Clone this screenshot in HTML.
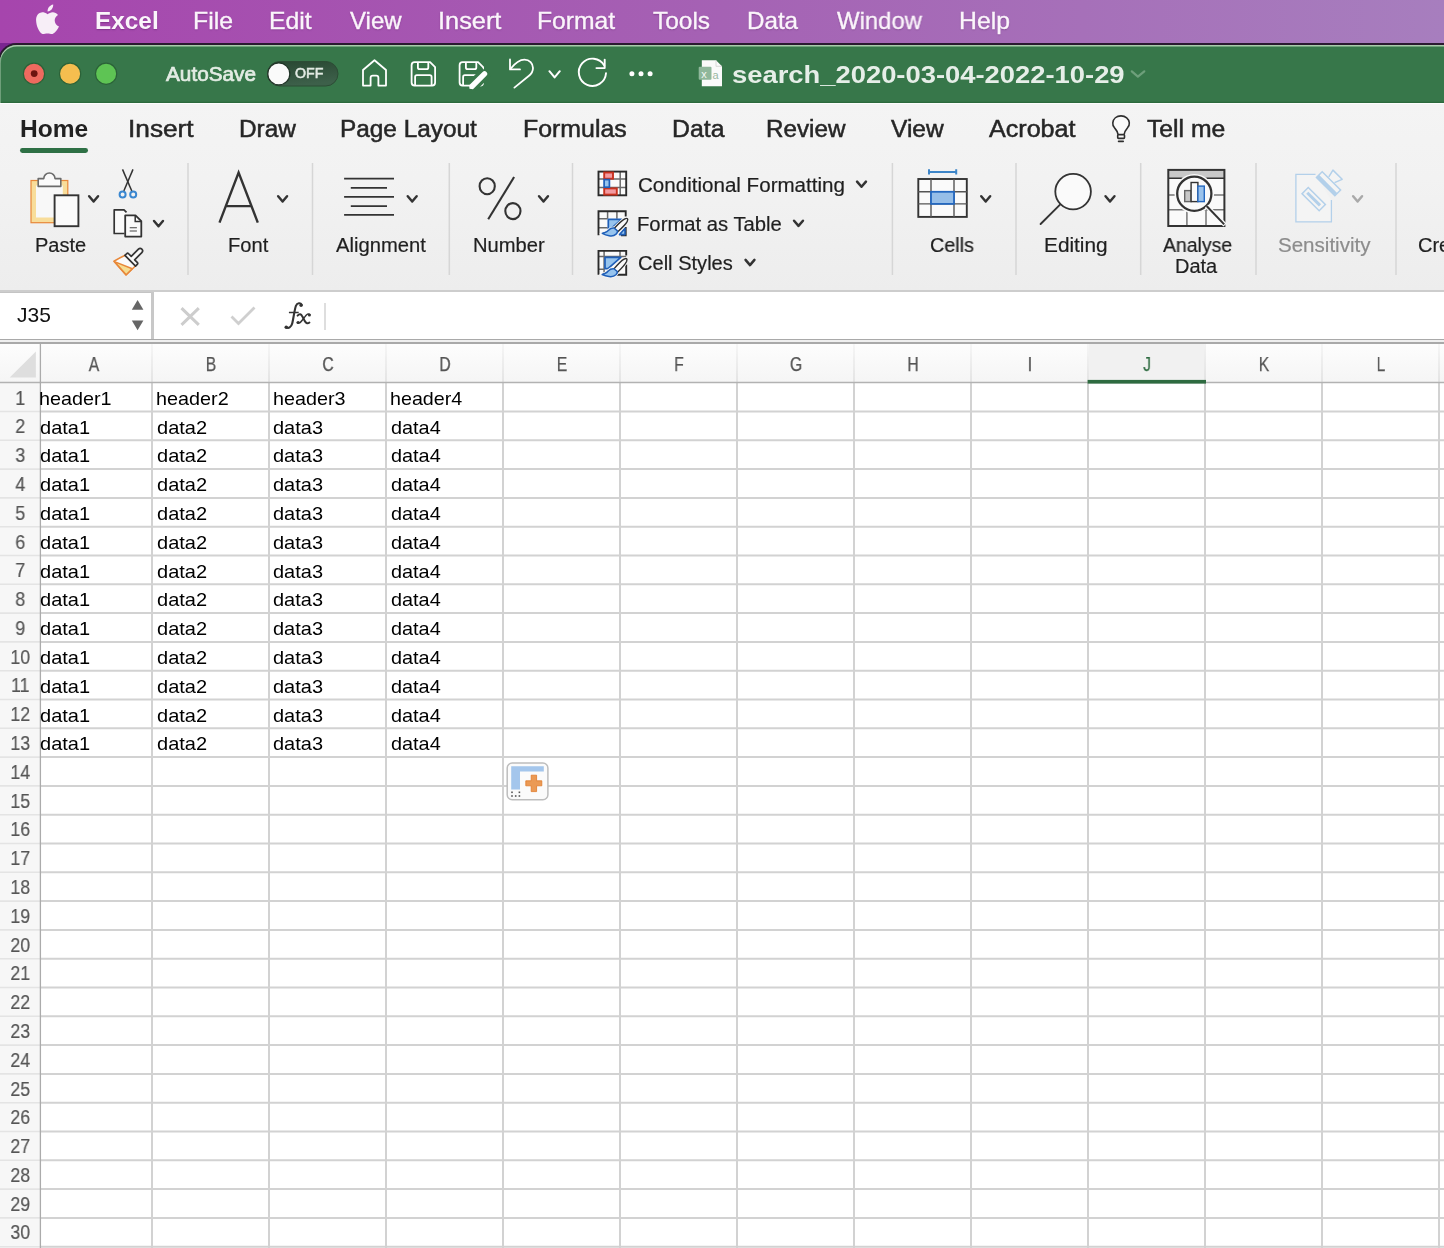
<!DOCTYPE html>
<html><head><meta charset="utf-8"><style>
*{margin:0;padding:0;box-sizing:border-box}
html,body{width:1444px;height:1248px;overflow:hidden;background:#fff;font-family:"Liberation Sans",sans-serif}
.t{position:absolute;white-space:nowrap;will-change:transform}
.b{position:absolute}
svg{position:absolute;left:0;top:0;overflow:visible}
</style></head><body>
<div class="b" style="left:0;top:0;width:1444px;height:44px;background:linear-gradient(90deg,#a645ad 0%,#a562b4 50%,#a77ebe 100%)"></div>
<div class="b" style="left:0;top:42.8px;width:40px;height:40px;background:#7a2590"></div>
<div class="b" style="left:-1.6px;top:42.8px;width:1450px;height:30px;background:#2a1a30;border-radius:18.5px 0 0 0"></div>
<div class="b" style="left:0;top:44.6px;width:1444px;height:58px;background:#37774a;border-radius:17px 0 0 0;box-shadow:inset 0 1.4px 0 #a9cbab,inset 1px 0 0 #6f9f7a,inset 0 -1.2px 0 #2c6a3d"></div>
<div class="b" style="left:0;top:103px;width:1444px;height:188px;background:linear-gradient(#f4f4f4 0%,#f2f2f2 40%,#ededed 100%)"></div>
<div class="b" style="left:0;top:103px;width:1444px;height:1px;background:#fdfdfd"></div>
<div class="b" style="left:0;top:290px;width:1444px;height:1.5px;background:#cdcdcd"></div>
<div class="b" style="left:20px;top:148px;width:68px;height:4.8px;border-radius:2.4px;background:#2e7045"></div>
<div class="b" style="left:0;top:291.5px;width:1444px;height:47.5px;background:#fff"></div>
<div class="b" style="left:0;top:291.5px;width:152px;height:1.5px;background:#c4c4c4"></div>
<div class="b" style="left:151px;top:291.5px;width:3px;height:47.5px;background:#c8c8c8"></div>
<div class="b" style="left:0;top:338.5px;width:1444px;height:1.2px;background:#a9a9a9"></div>
<div class="b" style="left:0;top:339.5px;width:1444px;height:3px;background:#efefef"></div>
<div class="b" style="left:0;top:342.4px;width:1444px;height:1.2px;background:#a9a9a9"></div>
<div class="b" style="left:324px;top:302.5px;width:1.5px;height:27px;background:#dedede"></div>
<svg width="1444" height="1248" style="left:0;top:0"><path d="M47.5,14.2 C45.5,12.8 43.5,12.2 41.5,12.4 C38,12.8 35.9,16.2 36.1,20.6 C36.3,26 39,32.4 42,33.8 C43.5,34.4 45,33.4 47.5,33.4 C50,33.4 51.5,34.4 53,33.8 C55.5,32.8 57.6,29.6 59,26.6 C56.2,25.3 54.7,23 54.7,20.3 C54.7,17.8 56.2,16 58,14.9 C56.5,13 54.5,12.2 52.6,12.3 C50.5,12.4 49.2,13.3 47.5,14.2 Z M47.6,11.6 C47.4,8.5 49.6,5.3 53.2,4.6 C53.4,8 51.2,11.2 47.6,11.6 Z" fill="#f7eef7"/><circle cx="34.0" cy="73.7" r="10.6" fill="#ee6a5f" stroke="#2b6238" stroke-width="1.2"/><circle cx="70.1" cy="73.7" r="10.6" fill="#f5be4f" stroke="#2b6238" stroke-width="1.2"/><circle cx="106.1" cy="73.7" r="10.6" fill="#5ec454" stroke="#2b6238" stroke-width="1.2"/><circle cx="34.2" cy="73.6" r="3.4" fill="#6e1410"/><defs><linearGradient id="tg" x1="0" y1="0" x2="0.3" y2="1"><stop offset="0" stop-color="#284631"/><stop offset="1" stop-color="#3d604a"/></linearGradient></defs><rect x="267.5" y="61.5" width="70.5" height="24.5" rx="12.25" fill="url(#tg)" stroke="#2c4c35" stroke-width="1"/><circle cx="278.8" cy="73.9" r="11" fill="#fafafa" stroke="#1f3326" stroke-width="1.2"/><path d="M363,85.6 L363,70 L374.5,60.2 L386,70 L386,85.6 L378.4,85.6 L378.4,77.8 Q378.4,75.6 376.2,75.6 L372.8,75.6 Q370.6,75.6 370.6,77.8 L370.6,85.6 Z" fill="none" stroke="#ffffff" stroke-width="1.8" stroke-linejoin="round"/><path d="M414.6,62.2 L430.1,62.2 L435.1,67.2 L435.1,82.6 Q435.1,85.6 432.1,85.6 L414.6,85.6 Q411.6,85.6 411.6,82.6 L411.6,65.2 Q411.6,62.2 414.6,62.2 Z" fill="none" stroke="#ffffff" stroke-width="1.8" stroke-linejoin="round"/><path d="M417.90000000000003,62.5 L417.90000000000003,67.5 Q417.90000000000003,69.2 419.6,69.2 L426.6,69.2 Q428.3,69.2 428.3,67.5 L428.3,62.5" fill="none" stroke="#ffffff" stroke-width="1.8"/><path d="M415.1,85.5 L415.1,77 Q415.1,75.2 416.90000000000003,75.2 L429.8,75.2 Q431.6,75.2 431.6,77 L431.6,85.5" fill="none" stroke="#ffffff" stroke-width="1.8"/><path d="M462.6,62.2 L478.1,62.2 L483.1,67.2 L483.1,82.6 Q483.1,85.6 480.1,85.6 L462.6,85.6 Q459.6,85.6 459.6,82.6 L459.6,65.2 Q459.6,62.2 462.6,62.2 Z" fill="none" stroke="#ffffff" stroke-width="1.8" stroke-linejoin="round"/><path d="M465.90000000000003,62.5 L465.90000000000003,67.5 Q465.90000000000003,69.2 467.6,69.2 L474.6,69.2 Q476.3,69.2 476.3,67.5 L476.3,62.5" fill="none" stroke="#ffffff" stroke-width="1.8"/><path d="M463.1,85.5 L463.1,77 Q463.1,75.2 464.90000000000003,75.2 L477.8,75.2 Q479.6,75.2 479.6,77 L479.6,85.5" fill="none" stroke="#ffffff" stroke-width="1.8"/><rect x="468" y="72" width="26" height="26" fill="#38784a" transform="rotate(0)" opacity="0"/><path d="M472.5,79 L486.5,73" fill="none"/><g transform="translate(478.5,79.8) rotate(-45)"><rect x="-9" y="-6" width="20" height="12" fill="#38784a"/><path d="M-10.5,-2.7 L8.5,-2.7 Q11.2,-2.7 11.2,0 Q11.2,2.7 8.5,2.7 L-10.5,2.7 L-12.8,0 Z" fill="#fff"/></g><path d="M510,59.5 L510,69.4 L520,69.4" fill="none" stroke="#ffffff" stroke-width="1.8" stroke-linecap="round" stroke-linejoin="round"/><path d="M510.6,68.8 C515.5,62.5 520,59.6 524.5,59.6 C529.5,59.6 533,63.5 533,68 C533,71 531.8,73.5 529,75.8 L514.4,87.6" fill="none" stroke="#ffffff" stroke-width="1.8" stroke-linecap="round"/><path d="M549.4,71.2 L554.6,77.4 L559.8,71.2" fill="none" stroke="#ffffff" stroke-width="2" stroke-linecap="round" stroke-linejoin="round"/><path d="M604.3,65.6 A13.6,13.6 0 1 0 606,73.2" fill="none" stroke="#ffffff" stroke-width="1.9" stroke-linecap="round"/><path d="M604.7,59.6 L604.7,68.1 L596.4,68.1" fill="none" stroke="#ffffff" stroke-width="1.9" stroke-linecap="round" stroke-linejoin="round"/><circle cx="631.9" cy="73.8" r="2.5" fill="#ffffff"/><circle cx="641" cy="73.8" r="2.5" fill="#ffffff"/><circle cx="650.1" cy="73.8" r="2.5" fill="#ffffff"/><path d="M701.8,60.3 L716,60.3 L722,66.3 L722,86.3 L701.8,86.3 Z" fill="#fafafa"/><path d="M716,60.3 L716,66.3 L722,66.3" fill="none" stroke="#d0d0d0" stroke-width="0.8"/><text x="712.5" y="79" font-family="Liberation Sans" font-size="11" fill="#9ab8a2">a</text><rect x="698.7" y="66.7" width="12.8" height="13.1" rx="1" fill="#8fb79b"/><text x="701.3" y="77.8" font-family="Liberation Sans" font-size="11" fill="#f4f8f5">x</text><path d="M1131.8,71.3 L1137.9,76.6 L1144.3,71.3" fill="none" stroke="#6e9f7b" stroke-width="2.2" stroke-linecap="round" stroke-linejoin="round"/><rect x="187.25" y="163" width="1.5" height="112" fill="#d6d6d6"/><rect x="311.75" y="163" width="1.5" height="112" fill="#d6d6d6"/><rect x="448.55" y="163" width="1.5" height="112" fill="#d6d6d6"/><rect x="571.75" y="163" width="1.5" height="112" fill="#d6d6d6"/><rect x="891.65" y="163" width="1.5" height="112" fill="#d6d6d6"/><rect x="1015.25" y="163" width="1.5" height="112" fill="#d6d6d6"/><rect x="1139.95" y="163" width="1.5" height="112" fill="#d6d6d6"/><rect x="1255.25" y="163" width="1.5" height="112" fill="#d6d6d6"/><rect x="1395.25" y="163" width="1.5" height="112" fill="#d6d6d6"/><rect x="31" y="180.5" width="36.8" height="42.2" fill="#f8dd9a" stroke="#e8883a" stroke-width="1.2"/><rect x="36" y="185.5" width="26.8" height="32" fill="#f8f8f8"/><path d="M38.2,178.6 L43.8,178.6 A5.6,5.6 0 0 1 55,178.6 L60.8,178.6 L60.8,186.4 L38.2,186.4 Z" fill="#fafafa" stroke="#6b6b6b" stroke-width="1.6" stroke-linejoin="round"/><rect x="54.6" y="195.3" width="23.8" height="30.9" fill="#fafafa" stroke="#333" stroke-width="1.9"/><path d="M89.15,196.30 L93.6,201.5 L98.05,196.30" fill="none" stroke="#333333" stroke-width="2.5" stroke-linecap="round" stroke-linejoin="round"/><path d="M122.5,169.4 L131.8,191" fill="none" stroke="#333" stroke-width="1.5"/><path d="M133,169.4 L123.8,191" fill="none" stroke="#333" stroke-width="1.5"/><circle cx="122.6" cy="194.5" r="3" fill="none" stroke="#3a87d0" stroke-width="2"/><circle cx="133.2" cy="194.5" r="3" fill="none" stroke="#3a87d0" stroke-width="2"/><path d="M114.2,209.8 L124,209.8 L126.5,212.3 L126.5,233.5 L114.2,233.5 Z" fill="#fafafa"/><path d="M124.5,233.5 L114.2,233.5 L114.2,209.8 L124,209.8 L126.5,212.3" fill="none" stroke="#333" stroke-width="1.7" stroke-linejoin="round"/><path d="M125.2,215.3 L135.5,215.3 L141.3,221.1 L141.3,236.6 L125.2,236.6 Z" fill="#fafafa" stroke="#333" stroke-width="1.8" stroke-linejoin="round"/><path d="M135.2,215.5 L135.2,221.4 L141,221.4" fill="none" stroke="#333" stroke-width="1.5"/><path d="M129.7,227.8 L136.9,227.8 M129.7,231 L136.9,231" stroke="#444" stroke-width="1.1"/><path d="M154.05,221.00 L158.5,226.2 L162.95,221.00" fill="none" stroke="#333333" stroke-width="2.5" stroke-linecap="round" stroke-linejoin="round"/><g transform="translate(130.8,260.2) rotate(45)"><path d="M-7.5,0.5 Q-9.5,6 -11.2,12.7 L7,13.8 L7.4,0.5 Z" fill="#fafafa" stroke="#e8883a" stroke-width="1.5" stroke-linejoin="round"/><path d="M-10.6,12.6 L7.1,5 L7,13.6 Z" fill="#f5dd91" stroke="#e8883a" stroke-width="1.5" stroke-linejoin="round"/><path d="M-7.5,0.8 L-7.5,-1.6 Q-7.5,-3 -6.1,-3 L-2.4,-3 L-2.4,-13.2 Q-2.4,-15.6 0,-15.6 Q2.4,-15.6 2.4,-13.2 L2.4,-3 L6.1,-3 Q7.5,-3 7.5,-1.6 L7.5,0.8 Z" fill="#fafafa" stroke="#333" stroke-width="1.7" stroke-linejoin="round"/></g><path d="M219.5,222.6 L238.6,172.5 L257.8,222.6 M226.2,206.1 L251,206.1" fill="none" stroke="#333" stroke-width="2.4"/><path d="M278.15,196.30 L282.6,201.5 L287.05,196.30" fill="none" stroke="#333333" stroke-width="2.5" stroke-linecap="round" stroke-linejoin="round"/><path d="M344.1,178.7 L394,178.7 M350.8,187.9 L387,187.9 M344.1,196.9 L394,196.9 M350.8,206.1 L387,206.1 M344.1,214.8 L394,214.8" stroke="#333" stroke-width="1.8"/><path d="M407.75,196.30 L412.2,201.5 L416.65,196.30" fill="none" stroke="#333333" stroke-width="2.5" stroke-linecap="round" stroke-linejoin="round"/><path d="M514.1,177 L488.2,219.3" stroke="#333" stroke-width="2.1"/><ellipse cx="487.2" cy="186.2" rx="7.6" ry="8" fill="none" stroke="#333" stroke-width="2.1"/><ellipse cx="512.9" cy="211.1" rx="7.6" ry="8" fill="none" stroke="#333" stroke-width="2.1"/><path d="M539.05,196.30 L543.5,201.5 L547.95,196.30" fill="none" stroke="#333333" stroke-width="2.5" stroke-linecap="round" stroke-linejoin="round"/><rect x="598.5" y="171.6" width="27.7" height="23.7" fill="#fafafa"/><path d="M620.2,171.6 L620.2,195.3 M598.5,178.9 L626.2,178.9 M598.5,187.6 L626.2,187.6" stroke="#6a6a6a" stroke-width="1.5"/><rect x="598.5" y="171.6" width="27.7" height="23.7" fill="none" stroke="#2a2a2a" stroke-width="1.9"/><rect x="604.2" y="172.5" width="8.8" height="6.2" fill="#f29aa0" stroke="#c8321f" stroke-width="1.9"/><rect x="604.2" y="188.4" width="12.6" height="6.2" fill="#f29aa0" stroke="#c8321f" stroke-width="1.9"/><rect x="604.1" y="179.6" width="5.3" height="7.6" fill="#97c4ee" stroke="#1f5fb8" stroke-width="1.7"/><rect x="598.5" y="211.3" width="27.2" height="24" fill="#fafafa"/><path d="M607.6,211.3 L607.6,218.7 M616.9,211.3 L616.9,218.7 M598.5,218.7 L607.6,218.7 M598.5,227.8 L607.6,227.8" stroke="#6a6a6a" stroke-width="1.5"/><path d="M598.5,235.3 L598.5,211.3 L625.7,211.3 L625.7,216.5 M625.7,227 L625.7,235.3 L621,235.3" fill="none" stroke="#2a2a2a" stroke-width="1.9"/><path d="M608.3,219.4 L621.5,219.4 L608.3,231.2 Z" fill="#97c4ee" stroke="#1f5fb8" stroke-width="1.7" stroke-linejoin="round"/><path d="M619.5,234.6 L625,234.6 L625,228.3 Z" fill="#97c4ee" stroke="#1f5fb8" stroke-width="1.6" stroke-linejoin="round"/><g transform="translate(615.8,230.2) rotate(-44.5)"><path d="M0,-2.4 C6,-2.7 12,-2.5 14.4,-1.7 Q16.4,-0.9 16.4,0 Q16.4,0.9 14.4,1.7 C12,2.5 6,2.7 0,2.4 Z" fill="#fff" stroke="#f4f4f4" stroke-width="3.2"/><path d="M0.4,-2.6 Q-1.8,-5.4 -4.8,-5.1 Q-7.6,-4.9 -9.4,-6 Q-10.8,-7 -11.8,-7.2 Q-10.8,-3.8 -8.6,-0.8 Q-6.2,2.8 -2.6,3 Q0.3,3 0.7,1.4 Z" fill="#fff" stroke="#f4f4f4" stroke-width="3.2"/><path d="M0,-2.4 C6,-2.7 12,-2.5 14.4,-1.7 Q16.4,-0.9 16.4,0 Q16.4,0.9 14.4,1.7 C12,2.5 6,2.7 0,2.4 Z" fill="#fafafa" stroke="#2e2e2e" stroke-width="1.4"/><path d="M0.4,-2.6 Q-1.8,-5.4 -4.8,-5.1 Q-7.6,-4.9 -9.4,-6 Q-10.8,-7 -11.8,-7.2 Q-10.8,-3.8 -8.6,-0.8 Q-6.2,2.8 -2.6,3 Q0.3,3 0.7,1.4 Z" fill="#97c4ee" stroke="#1f5fb8" stroke-width="1.5" stroke-linejoin="round"/></g><rect x="598.5" y="250.9" width="27.7" height="23.8" fill="#fafafa"/><path d="M604.1,250.9 L604.1,274.7 M620,250.9 L620,256.6 M598.5,256.6 L626.2,256.6 M598.5,269.2 L604.1,269.2" stroke="#6a6a6a" stroke-width="1.5"/><path d="M598.5,274.7 L598.5,250.9 L626.2,250.9 L626.2,255.5 M626.2,264.5 L626.2,274.7 L616.5,274.7" fill="none" stroke="#2a2a2a" stroke-width="1.9"/><path d="M605,268.6 L605,257.3 L620.8,257.3 L608,268.6 Z" fill="#97c4ee" stroke="#1f5fb8" stroke-width="1.7" stroke-linejoin="round"/><g transform="translate(615.5,270.8) rotate(-47)"><path d="M0,-2.4 C6,-2.7 12,-2.5 14.4,-1.7 Q16.4,-0.9 16.4,0 Q16.4,0.9 14.4,1.7 C12,2.5 6,2.7 0,2.4 Z" fill="#fff" stroke="#f4f4f4" stroke-width="3.2"/><path d="M0.4,-2.6 Q-1.8,-5.4 -4.8,-5.1 Q-7.6,-4.9 -9.4,-6 Q-10.8,-7 -11.8,-7.2 Q-10.8,-3.8 -8.6,-0.8 Q-6.2,2.8 -2.6,3 Q0.3,3 0.7,1.4 Z" fill="#fff" stroke="#f4f4f4" stroke-width="3.2"/><path d="M0,-2.4 C6,-2.7 12,-2.5 14.4,-1.7 Q16.4,-0.9 16.4,0 Q16.4,0.9 14.4,1.7 C12,2.5 6,2.7 0,2.4 Z" fill="#fafafa" stroke="#2e2e2e" stroke-width="1.4"/><path d="M0.4,-2.6 Q-1.8,-5.4 -4.8,-5.1 Q-7.6,-4.9 -9.4,-6 Q-10.8,-7 -11.8,-7.2 Q-10.8,-3.8 -8.6,-0.8 Q-6.2,2.8 -2.6,3 Q0.3,3 0.7,1.4 Z" fill="#97c4ee" stroke="#1f5fb8" stroke-width="1.5" stroke-linejoin="round"/></g><path d="M857.05,181.60 L861.5,186.8 L865.95,181.60" fill="none" stroke="#333333" stroke-width="2.5" stroke-linecap="round" stroke-linejoin="round"/><path d="M794.05,220.70 L798.5,225.9 L802.95,220.70" fill="none" stroke="#333333" stroke-width="2.5" stroke-linecap="round" stroke-linejoin="round"/><path d="M745.55,259.90 L750,265.1 L754.45,259.90" fill="none" stroke="#333333" stroke-width="2.5" stroke-linecap="round" stroke-linejoin="round"/><rect x="918.3" y="179" width="48.5" height="37.9" fill="#fafafa" stroke="#333" stroke-width="1.9"/><path d="M931,179 L931,216.9 M954,179 L954,216.9 M918.3,191.8 L966.8,191.8 M918.3,203.9 L966.8,203.9" stroke="#555" stroke-width="1.4"/><rect x="931" y="191.8" width="23" height="12.1" fill="#96bee8" stroke="#2468c0" stroke-width="1.8"/><path d="M929,172 L956.2,172 M929,169.3 L929,174.6 M956.2,169.3 L956.2,174.6" stroke="#3d85c8" stroke-width="2"/><path d="M981.25,196.30 L985.7,201.5 L990.15,196.30" fill="none" stroke="#333333" stroke-width="2.5" stroke-linecap="round" stroke-linejoin="round"/><circle cx="1073.1" cy="191.6" r="17.8" fill="#fafafa" stroke="#333" stroke-width="1.8"/><path d="M1059.8,204.8 L1040.6,224" stroke="#333" stroke-width="1.9" stroke-linecap="round"/><path d="M1105.55,196.30 L1110,201.5 L1114.45,196.30" fill="none" stroke="#333333" stroke-width="2.5" stroke-linecap="round" stroke-linejoin="round"/><rect x="1168.3" y="169.9" width="56.1" height="56.1" fill="#fafafa"/><rect x="1168.3" y="169.9" width="56.1" height="8.4" fill="#c8c8c8"/><path d="M1168.3,178.3 L1224.4,178.3" stroke="#333" stroke-width="1.5"/><path d="M1168.3,195.1 L1224.4,195.1 M1168.3,209.7 L1224.4,209.7 M1186.9,209.7 L1186.9,226 M1206,209.7 L1206,226" stroke="#777" stroke-width="1.5"/><rect x="1168.3" y="169.9" width="56.1" height="56.1" fill="none" stroke="#333" stroke-width="2"/><circle cx="1194.3" cy="193.7" r="19.8" fill="#fafafa"/><circle cx="1194.3" cy="193.7" r="17.1" fill="#fafafa" stroke="#333" stroke-width="2.3"/><path d="M1206.6,206 L1225,225" stroke="#fafafa" stroke-width="4.5"/><path d="M1206.6,206 L1224.2,224.4" stroke="#333" stroke-width="2"/><rect x="1184.7" y="190.6" width="6.4" height="11" fill="#c8c8c8" stroke="#666" stroke-width="1.4"/><rect x="1191.1" y="182.5" width="6.8" height="19.1" fill="#fafafa" stroke="#333" stroke-width="1.4"/><rect x="1197.9" y="186.1" width="6.4" height="15.5" fill="#9bc3ec" stroke="#2468c0" stroke-width="1.4"/><path d="M1315.5,174.4 L1295.9,174.4 L1295.9,221.8 L1331.4,221.8 L1331.4,200" fill="#f4f4f4" stroke="#b3d0ea" stroke-width="1.3"/><g transform="translate(1322.2,170.7) rotate(45)"><rect x="0.7" y="0.7" width="26" height="8.1" fill="#f4f4f4" stroke="#b3d0ea" stroke-width="1.5"/><rect x="0.7" y="5.2" width="26" height="3.6" fill="#b3d0ea"/><path d="M9,-0.3 L7.2,-8 L20.2,-8 L17.1,-0.3" fill="#f4f4f4" stroke="#b3d0ea" stroke-width="1.5" stroke-linejoin="round"/><rect x="2" y="21.7" width="24.2" height="8.8" fill="#f4f4f4" stroke="#b3d0ea" stroke-width="1.5"/><rect x="5" y="24.6" width="18" height="3" fill="#b3d0ea"/></g><path d="M1353.15,196.30 L1357.6,201.5 L1362.05,196.30" fill="none" stroke="#a9a9a9" stroke-width="2.5" stroke-linecap="round" stroke-linejoin="round"/><path d="M131.8,309.7 L137.6,300 L143.4,309.7 Z" fill="#666"/><path d="M131.8,320.6 L137.6,330.2 L143.4,320.6 Z" fill="#666"/><path d="M181.5,308.2 L198.8,324.8 M198.8,308.2 L181.5,324.8" stroke="#cdcdcd" stroke-width="3"/><path d="M231.5,316.5 L238.5,323.5 L254.5,307.5" fill="none" stroke="#cfcfcf" stroke-width="2.8"/><path d="M301.6,304.6 C300.6,302.6 297.2,302.6 295.9,305.8 C294.6,309.2 293.3,319.5 292.2,323.6 C291.2,327.4 288.4,328.8 286.2,327.2" fill="none" stroke="#333" stroke-width="2.1" stroke-linecap="round"/><circle cx="301.1" cy="305.2" r="1.7" fill="#333"/><circle cx="286.2" cy="327.3" r="1.7" fill="#333"/><path d="M288.9,312.5 L298.7,312.5" stroke="#333" stroke-width="1.5"/><path d="M297.6,315.6 Q300.4,312.6 302.4,316.6 L305,321.4 Q307,324.6 309.4,322.6" fill="none" stroke="#333" stroke-width="2" stroke-linecap="round"/><path d="M309.8,314.6 Q307.6,312.8 305.2,316.4 L301.6,321 Q299.6,324 297.4,322.6" fill="none" stroke="#333" stroke-width="1.5" stroke-linecap="round"/><circle cx="309.4" cy="314.9" r="1.5" fill="#333"/><circle cx="298.1" cy="322.5" r="1.6" fill="#333"/><path d="M1118.1,134.6 C1117.5,131 1116,129.5 1114.5,127.8 C1113,126 1112.6,124.5 1112.8,122.8 C1113.2,118.6 1116.6,115.9 1121,115.9 C1125.4,115.9 1129,118.6 1129.3,122.8 C1129.5,124.5 1129,126 1127.5,127.8 C1126,129.5 1124.6,131 1124.1,134.6" fill="#fafafa" stroke="#2e2e2e" stroke-width="1.6"/><rect x="1117.7" y="134.6" width="6.8" height="3.8" rx="0.8" fill="#fafafa" stroke="#2e2e2e" stroke-width="1.6"/><path d="M1118.6,141.3 L1123.2,141.3" stroke="#2e2e2e" stroke-width="1.7" stroke-linecap="round"/></svg>
<div class="t" style="left:95.06px;top:8.70px;font-size:24px;line-height:24px;font-weight:bold;color:#fbf5fb;transform:scaleX(1.0152);transform-origin:0 0;text-shadow:0 0.6px 1.5px rgba(70,10,80,.35)">Excel</div>
<div class="t" style="left:193.33px;top:8.70px;font-size:24px;line-height:24px;font-weight:normal;color:#fbf5fb;transform:scaleX(1.0340);transform-origin:0 0;-webkit-text-stroke:0.35px #fbf5fb;text-shadow:0 0.6px 1.5px rgba(70,10,80,.35)">File</div>
<div class="t" style="left:269.43px;top:8.70px;font-size:24px;line-height:24px;font-weight:normal;color:#fbf5fb;transform:scaleX(1.0324);transform-origin:0 0;-webkit-text-stroke:0.35px #fbf5fb;text-shadow:0 0.6px 1.5px rgba(70,10,80,.35)">Edit</div>
<div class="t" style="left:350.05px;top:8.70px;font-size:24px;line-height:24px;font-weight:normal;color:#fbf5fb;-webkit-text-stroke:0.35px #fbf5fb;text-shadow:0 0.6px 1.5px rgba(70,10,80,.35)">View</div>
<div class="t" style="left:437.83px;top:8.70px;font-size:24px;line-height:24px;font-weight:normal;color:#fbf5fb;transform:scaleX(1.0564);transform-origin:0 0;-webkit-text-stroke:0.35px #fbf5fb;text-shadow:0 0.6px 1.5px rgba(70,10,80,.35)">Insert</div>
<div class="t" style="left:537.14px;top:8.70px;font-size:24px;line-height:24px;font-weight:normal;color:#fbf5fb;transform:scaleX(1.0283);transform-origin:0 0;-webkit-text-stroke:0.35px #fbf5fb;text-shadow:0 0.6px 1.5px rgba(70,10,80,.35)">Format</div>
<div class="t" style="left:653.13px;top:8.70px;font-size:24px;line-height:24px;font-weight:normal;color:#fbf5fb;transform:scaleX(1.0181);transform-origin:0 0;-webkit-text-stroke:0.35px #fbf5fb;text-shadow:0 0.6px 1.5px rgba(70,10,80,.35)">Tools</div>
<div class="t" style="left:746.88px;top:8.70px;font-size:24px;line-height:24px;font-weight:normal;color:#fbf5fb;transform:scaleX(1.0068);transform-origin:0 0;-webkit-text-stroke:0.35px #fbf5fb;text-shadow:0 0.6px 1.5px rgba(70,10,80,.35)">Data</div>
<div class="t" style="left:837.06px;top:8.70px;font-size:24px;line-height:24px;font-weight:normal;color:#fbf5fb;transform:scaleX(0.9945);transform-origin:0 0;-webkit-text-stroke:0.35px #fbf5fb;text-shadow:0 0.6px 1.5px rgba(70,10,80,.35)">Window</div>
<div class="t" style="left:958.73px;top:8.70px;font-size:24px;line-height:24px;font-weight:normal;color:#fbf5fb;transform:scaleX(1.0317);transform-origin:0 0;-webkit-text-stroke:0.35px #fbf5fb;text-shadow:0 0.6px 1.5px rgba(70,10,80,.35)">Help</div>
<div class="t" style="left:166.40px;top:63.60px;font-size:20px;line-height:20px;font-weight:normal;color:#e3ece4;transform:scaleX(1.0373);transform-origin:0 0;-webkit-text-stroke:0.7px #e3ece4">AutoSave</div>
<div class="t" style="left:295.38px;top:67.27px;font-size:13.8px;line-height:13.8px;font-weight:normal;color:#e2eae3;transform:scaleX(1.0282);transform-origin:0 0;-webkit-text-stroke:0.5px #e2eae3">OFF</div>
<div class="t" style="left:731.94px;top:63.62px;font-size:23.5px;line-height:23.5px;font-weight:bold;color:#e6eee8;transform:scaleX(1.1646);transform-origin:0 0">search_2020-03-04-2022-10-29</div>
<div class="t" style="left:19.64px;top:118.22px;font-size:23.5px;line-height:23.5px;font-weight:bold;color:#212121;transform:scaleX(1.0442);transform-origin:0 0">Home</div>
<div class="t" style="left:127.82px;top:118.22px;font-size:23.5px;line-height:23.5px;font-weight:normal;color:#262626;transform:scaleX(1.1170);transform-origin:0 0;-webkit-text-stroke:0.5px #262626">Insert</div>
<div class="t" style="left:238.64px;top:118.22px;font-size:23.5px;line-height:23.5px;font-weight:normal;color:#262626;transform:scaleX(1.0360);transform-origin:0 0;-webkit-text-stroke:0.5px #262626">Draw</div>
<div class="t" style="left:340.14px;top:118.22px;font-size:23.5px;line-height:23.5px;font-weight:normal;color:#262626;transform:scaleX(1.0367);transform-origin:0 0;-webkit-text-stroke:0.5px #262626">Page Layout</div>
<div class="t" style="left:522.90px;top:118.22px;font-size:23.5px;line-height:23.5px;font-weight:normal;color:#262626;transform:scaleX(1.0591);transform-origin:0 0;-webkit-text-stroke:0.5px #262626">Formulas</div>
<div class="t" style="left:671.80px;top:118.22px;font-size:23.5px;line-height:23.5px;font-weight:normal;color:#262626;transform:scaleX(1.0565);transform-origin:0 0;-webkit-text-stroke:0.5px #262626">Data</div>
<div class="t" style="left:766.25px;top:118.22px;font-size:23.5px;line-height:23.5px;font-weight:normal;color:#262626;transform:scaleX(1.0306);transform-origin:0 0;-webkit-text-stroke:0.5px #262626">Review</div>
<div class="t" style="left:890.63px;top:118.22px;font-size:23.5px;line-height:23.5px;font-weight:normal;color:#262626;transform:scaleX(1.0423);transform-origin:0 0;-webkit-text-stroke:0.5px #262626">View</div>
<div class="t" style="left:989.19px;top:118.22px;font-size:23.5px;line-height:23.5px;font-weight:normal;color:#262626;transform:scaleX(1.0679);transform-origin:0 0;-webkit-text-stroke:0.5px #262626">Acrobat</div>
<div class="t" style="left:1147.29px;top:118.22px;font-size:23.5px;line-height:23.5px;font-weight:normal;color:#262626;transform:scaleX(1.0520);transform-origin:0 0;-webkit-text-stroke:0.5px #262626">Tell me</div>
<div class="t" style="left:35.26px;top:235.30px;font-size:20px;line-height:20px;font-weight:normal;color:#1f1f1f;transform:scaleX(0.9959);transform-origin:0 0;-webkit-text-stroke:0.2px #1f1f1f">Paste</div>
<div class="t" style="left:227.84px;top:235.30px;font-size:20px;line-height:20px;font-weight:normal;color:#1f1f1f;transform:scaleX(1.0052);transform-origin:0 0;-webkit-text-stroke:0.2px #1f1f1f">Font</div>
<div class="t" style="left:336.05px;top:235.30px;font-size:20px;line-height:20px;font-weight:normal;color:#1f1f1f;transform:scaleX(1.0096);transform-origin:0 0;-webkit-text-stroke:0.2px #1f1f1f">Alignment</div>
<div class="t" style="left:472.84px;top:235.30px;font-size:20px;line-height:20px;font-weight:normal;color:#1f1f1f;transform:scaleX(1.0080);transform-origin:0 0;-webkit-text-stroke:0.2px #1f1f1f">Number</div>
<div class="t" style="left:637.57px;top:174.60px;font-size:20px;line-height:20px;font-weight:normal;color:#1f1f1f;transform:scaleX(1.0284);transform-origin:0 0;-webkit-text-stroke:0.2px #1f1f1f">Conditional Formatting</div>
<div class="t" style="left:636.93px;top:213.80px;font-size:20px;line-height:20px;font-weight:normal;color:#1f1f1f;transform:scaleX(1.0128);transform-origin:0 0;-webkit-text-stroke:0.2px #1f1f1f">Format as Table</div>
<div class="t" style="left:637.60px;top:253.00px;font-size:20px;line-height:20px;font-weight:normal;color:#1f1f1f;transform:scaleX(1.0032);transform-origin:0 0;-webkit-text-stroke:0.2px #1f1f1f">Cell Styles</div>
<div class="t" style="left:929.71px;top:235.30px;font-size:20px;line-height:20px;font-weight:normal;color:#1f1f1f;transform:scaleX(0.9871);transform-origin:0 0;-webkit-text-stroke:0.2px #1f1f1f">Cells</div>
<div class="t" style="left:1044.38px;top:235.30px;font-size:20px;line-height:20px;font-weight:normal;color:#1f1f1f;transform:scaleX(1.0403);transform-origin:0 0;-webkit-text-stroke:0.2px #1f1f1f">Editing</div>
<div class="t" style="left:1163.35px;top:235.30px;font-size:20px;line-height:20px;font-weight:normal;color:#1f1f1f;transform:scaleX(0.9722);transform-origin:0 0;-webkit-text-stroke:0.2px #1f1f1f">Analyse</div>
<div class="t" style="left:1175.26px;top:256.00px;font-size:20px;line-height:20px;font-weight:normal;color:#1f1f1f;transform:scaleX(0.9951);transform-origin:0 0;-webkit-text-stroke:0.2px #1f1f1f">Data</div>
<div class="t" style="left:1278.18px;top:235.30px;font-size:20px;line-height:20px;font-weight:normal;color:#8c8c8c;transform:scaleX(1.0269);transform-origin:0 0;-webkit-text-stroke:0.2px #8c8c8c">Sensitivity</div>
<div class="t" style="left:1418.10px;top:235.30px;font-size:20px;line-height:20px;font-weight:normal;color:#1f1f1f;-webkit-text-stroke:0.2px #1f1f1f">Cre</div>
<div class="t" style="left:17.39px;top:304.25px;font-size:21px;line-height:21px;font-weight:normal;color:#111;transform:scaleX(0.9953);transform-origin:0 0">J35</div>
<div class="b" style="left:0;top:343.5px;width:1444px;height:39px;background:linear-gradient(#fdfdfd,#f5f5f5)"></div>
<div class="b" style="left:0;top:383px;width:40px;height:865px;background:#f7f7f7"></div>
<div class="b" style="left:1088.5px;top:343.5px;width:117px;height:37px;background:#f1f1f1"></div>
<svg width="1444" height="1248" style="left:0;top:0"><defs><linearGradient id="hs" gradientUnits="userSpaceOnUse" x1="0" y1="344" x2="0" y2="382"><stop offset="0" stop-color="#f2f2f2"/><stop offset="1" stop-color="#dadada"/></linearGradient></defs><polygon points="9.7,377.5 35.9,377.5 35.9,351.4" fill="#dedede"/><line x1="152" y1="344" x2="152" y2="382" stroke="url(#hs)" stroke-width="1.3"/><line x1="152" y1="383" x2="152" y2="1248" stroke="#d2d2d2" stroke-width="2"/><line x1="269" y1="344" x2="269" y2="382" stroke="url(#hs)" stroke-width="1.3"/><line x1="269" y1="383" x2="269" y2="1248" stroke="#d2d2d2" stroke-width="2"/><line x1="386" y1="344" x2="386" y2="382" stroke="url(#hs)" stroke-width="1.3"/><line x1="386" y1="383" x2="386" y2="1248" stroke="#d2d2d2" stroke-width="2"/><line x1="503" y1="344" x2="503" y2="382" stroke="url(#hs)" stroke-width="1.3"/><line x1="503" y1="383" x2="503" y2="1248" stroke="#d2d2d2" stroke-width="2"/><line x1="620" y1="344" x2="620" y2="382" stroke="url(#hs)" stroke-width="1.3"/><line x1="620" y1="383" x2="620" y2="1248" stroke="#d2d2d2" stroke-width="2"/><line x1="737" y1="344" x2="737" y2="382" stroke="url(#hs)" stroke-width="1.3"/><line x1="737" y1="383" x2="737" y2="1248" stroke="#d2d2d2" stroke-width="2"/><line x1="854" y1="344" x2="854" y2="382" stroke="url(#hs)" stroke-width="1.3"/><line x1="854" y1="383" x2="854" y2="1248" stroke="#d2d2d2" stroke-width="2"/><line x1="971" y1="344" x2="971" y2="382" stroke="url(#hs)" stroke-width="1.3"/><line x1="971" y1="383" x2="971" y2="1248" stroke="#d2d2d2" stroke-width="2"/><line x1="1088" y1="344" x2="1088" y2="382" stroke="url(#hs)" stroke-width="1.3"/><line x1="1088" y1="383" x2="1088" y2="1248" stroke="#d2d2d2" stroke-width="2"/><line x1="1205" y1="344" x2="1205" y2="382" stroke="url(#hs)" stroke-width="1.3"/><line x1="1205" y1="383" x2="1205" y2="1248" stroke="#d2d2d2" stroke-width="2"/><line x1="1322" y1="344" x2="1322" y2="382" stroke="url(#hs)" stroke-width="1.3"/><line x1="1322" y1="383" x2="1322" y2="1248" stroke="#d2d2d2" stroke-width="2"/><line x1="1439" y1="344" x2="1439" y2="382" stroke="url(#hs)" stroke-width="1.3"/><line x1="1439" y1="383" x2="1439" y2="1248" stroke="#d2d2d2" stroke-width="2"/><line x1="40" y1="411.50" x2="1444" y2="411.50" stroke="#d2d2d2" stroke-width="2"/><line x1="0" y1="411.50" x2="40" y2="411.50" stroke="#e4e4e4" stroke-width="1.6"/><line x1="40" y1="440.30" x2="1444" y2="440.30" stroke="#d2d2d2" stroke-width="2"/><line x1="0" y1="440.30" x2="40" y2="440.30" stroke="#e4e4e4" stroke-width="1.6"/><line x1="40" y1="469.10" x2="1444" y2="469.10" stroke="#d2d2d2" stroke-width="2"/><line x1="0" y1="469.10" x2="40" y2="469.10" stroke="#e4e4e4" stroke-width="1.6"/><line x1="40" y1="497.90" x2="1444" y2="497.90" stroke="#d2d2d2" stroke-width="2"/><line x1="0" y1="497.90" x2="40" y2="497.90" stroke="#e4e4e4" stroke-width="1.6"/><line x1="40" y1="526.70" x2="1444" y2="526.70" stroke="#d2d2d2" stroke-width="2"/><line x1="0" y1="526.70" x2="40" y2="526.70" stroke="#e4e4e4" stroke-width="1.6"/><line x1="40" y1="555.50" x2="1444" y2="555.50" stroke="#d2d2d2" stroke-width="2"/><line x1="0" y1="555.50" x2="40" y2="555.50" stroke="#e4e4e4" stroke-width="1.6"/><line x1="40" y1="584.30" x2="1444" y2="584.30" stroke="#d2d2d2" stroke-width="2"/><line x1="0" y1="584.30" x2="40" y2="584.30" stroke="#e4e4e4" stroke-width="1.6"/><line x1="40" y1="613.10" x2="1444" y2="613.10" stroke="#d2d2d2" stroke-width="2"/><line x1="0" y1="613.10" x2="40" y2="613.10" stroke="#e4e4e4" stroke-width="1.6"/><line x1="40" y1="641.90" x2="1444" y2="641.90" stroke="#d2d2d2" stroke-width="2"/><line x1="0" y1="641.90" x2="40" y2="641.90" stroke="#e4e4e4" stroke-width="1.6"/><line x1="40" y1="670.70" x2="1444" y2="670.70" stroke="#d2d2d2" stroke-width="2"/><line x1="0" y1="670.70" x2="40" y2="670.70" stroke="#e4e4e4" stroke-width="1.6"/><line x1="40" y1="699.50" x2="1444" y2="699.50" stroke="#d2d2d2" stroke-width="2"/><line x1="0" y1="699.50" x2="40" y2="699.50" stroke="#e4e4e4" stroke-width="1.6"/><line x1="40" y1="728.30" x2="1444" y2="728.30" stroke="#d2d2d2" stroke-width="2"/><line x1="0" y1="728.30" x2="40" y2="728.30" stroke="#e4e4e4" stroke-width="1.6"/><line x1="40" y1="757.10" x2="1444" y2="757.10" stroke="#d2d2d2" stroke-width="2"/><line x1="0" y1="757.10" x2="40" y2="757.10" stroke="#e4e4e4" stroke-width="1.6"/><line x1="40" y1="785.90" x2="1444" y2="785.90" stroke="#d2d2d2" stroke-width="2"/><line x1="0" y1="785.90" x2="40" y2="785.90" stroke="#e4e4e4" stroke-width="1.6"/><line x1="40" y1="814.70" x2="1444" y2="814.70" stroke="#d2d2d2" stroke-width="2"/><line x1="0" y1="814.70" x2="40" y2="814.70" stroke="#e4e4e4" stroke-width="1.6"/><line x1="40" y1="843.50" x2="1444" y2="843.50" stroke="#d2d2d2" stroke-width="2"/><line x1="0" y1="843.50" x2="40" y2="843.50" stroke="#e4e4e4" stroke-width="1.6"/><line x1="40" y1="872.30" x2="1444" y2="872.30" stroke="#d2d2d2" stroke-width="2"/><line x1="0" y1="872.30" x2="40" y2="872.30" stroke="#e4e4e4" stroke-width="1.6"/><line x1="40" y1="901.10" x2="1444" y2="901.10" stroke="#d2d2d2" stroke-width="2"/><line x1="0" y1="901.10" x2="40" y2="901.10" stroke="#e4e4e4" stroke-width="1.6"/><line x1="40" y1="929.90" x2="1444" y2="929.90" stroke="#d2d2d2" stroke-width="2"/><line x1="0" y1="929.90" x2="40" y2="929.90" stroke="#e4e4e4" stroke-width="1.6"/><line x1="40" y1="958.70" x2="1444" y2="958.70" stroke="#d2d2d2" stroke-width="2"/><line x1="0" y1="958.70" x2="40" y2="958.70" stroke="#e4e4e4" stroke-width="1.6"/><line x1="40" y1="987.50" x2="1444" y2="987.50" stroke="#d2d2d2" stroke-width="2"/><line x1="0" y1="987.50" x2="40" y2="987.50" stroke="#e4e4e4" stroke-width="1.6"/><line x1="40" y1="1016.30" x2="1444" y2="1016.30" stroke="#d2d2d2" stroke-width="2"/><line x1="0" y1="1016.30" x2="40" y2="1016.30" stroke="#e4e4e4" stroke-width="1.6"/><line x1="40" y1="1045.10" x2="1444" y2="1045.10" stroke="#d2d2d2" stroke-width="2"/><line x1="0" y1="1045.10" x2="40" y2="1045.10" stroke="#e4e4e4" stroke-width="1.6"/><line x1="40" y1="1073.90" x2="1444" y2="1073.90" stroke="#d2d2d2" stroke-width="2"/><line x1="0" y1="1073.90" x2="40" y2="1073.90" stroke="#e4e4e4" stroke-width="1.6"/><line x1="40" y1="1102.70" x2="1444" y2="1102.70" stroke="#d2d2d2" stroke-width="2"/><line x1="0" y1="1102.70" x2="40" y2="1102.70" stroke="#e4e4e4" stroke-width="1.6"/><line x1="40" y1="1131.50" x2="1444" y2="1131.50" stroke="#d2d2d2" stroke-width="2"/><line x1="0" y1="1131.50" x2="40" y2="1131.50" stroke="#e4e4e4" stroke-width="1.6"/><line x1="40" y1="1160.30" x2="1444" y2="1160.30" stroke="#d2d2d2" stroke-width="2"/><line x1="0" y1="1160.30" x2="40" y2="1160.30" stroke="#e4e4e4" stroke-width="1.6"/><line x1="40" y1="1189.10" x2="1444" y2="1189.10" stroke="#d2d2d2" stroke-width="2"/><line x1="0" y1="1189.10" x2="40" y2="1189.10" stroke="#e4e4e4" stroke-width="1.6"/><line x1="40" y1="1217.90" x2="1444" y2="1217.90" stroke="#d2d2d2" stroke-width="2"/><line x1="0" y1="1217.90" x2="40" y2="1217.90" stroke="#e4e4e4" stroke-width="1.6"/><line x1="40" y1="1246.70" x2="1444" y2="1246.70" stroke="#d2d2d2" stroke-width="2"/><line x1="0" y1="1246.70" x2="40" y2="1246.70" stroke="#e4e4e4" stroke-width="1.6"/><line x1="0" y1="382.5" x2="1444" y2="382.5" stroke="#b2b2b2" stroke-width="1.4"/><line x1="40.4" y1="343.5" x2="40.4" y2="1248" stroke="#ababab" stroke-width="1.3"/><rect x="1087.6" y="379.9" width="118.4" height="3.7" fill="#2e6b40"/></svg>
<div class="t" style="left:54.3px;top:354.62px;width:80px;text-align:center;font-size:19.5px;line-height:19.5px;color:#555;transform:scaleX(0.8);transform-origin:50% 0;-webkit-text-stroke:0.25px #555">A</div>
<div class="t" style="left:170.5px;top:354.62px;width:80px;text-align:center;font-size:19.5px;line-height:19.5px;color:#555;transform:scaleX(0.8);transform-origin:50% 0;-webkit-text-stroke:0.25px #555">B</div>
<div class="t" style="left:287.5px;top:354.62px;width:80px;text-align:center;font-size:19.5px;line-height:19.5px;color:#555;transform:scaleX(0.8);transform-origin:50% 0;-webkit-text-stroke:0.25px #555">C</div>
<div class="t" style="left:404.5px;top:354.62px;width:80px;text-align:center;font-size:19.5px;line-height:19.5px;color:#555;transform:scaleX(0.8);transform-origin:50% 0;-webkit-text-stroke:0.25px #555">D</div>
<div class="t" style="left:521.5px;top:354.62px;width:80px;text-align:center;font-size:19.5px;line-height:19.5px;color:#555;transform:scaleX(0.8);transform-origin:50% 0;-webkit-text-stroke:0.25px #555">E</div>
<div class="t" style="left:638.5px;top:354.62px;width:80px;text-align:center;font-size:19.5px;line-height:19.5px;color:#555;transform:scaleX(0.8);transform-origin:50% 0;-webkit-text-stroke:0.25px #555">F</div>
<div class="t" style="left:755.5px;top:354.62px;width:80px;text-align:center;font-size:19.5px;line-height:19.5px;color:#555;transform:scaleX(0.8);transform-origin:50% 0;-webkit-text-stroke:0.25px #555">G</div>
<div class="t" style="left:872.5px;top:354.62px;width:80px;text-align:center;font-size:19.5px;line-height:19.5px;color:#555;transform:scaleX(0.8);transform-origin:50% 0;-webkit-text-stroke:0.25px #555">H</div>
<div class="t" style="left:989.5px;top:354.62px;width:80px;text-align:center;font-size:19.5px;line-height:19.5px;color:#555;transform:scaleX(0.8);transform-origin:50% 0;-webkit-text-stroke:0.25px #555">I</div>
<div class="t" style="left:1106.5px;top:354.62px;width:80px;text-align:center;font-size:19.5px;line-height:19.5px;color:#2e6b40;transform:scaleX(0.8);transform-origin:50% 0;-webkit-text-stroke:0.25px #2e6b40">J</div>
<div class="t" style="left:1223.5px;top:354.62px;width:80px;text-align:center;font-size:19.5px;line-height:19.5px;color:#555;transform:scaleX(0.8);transform-origin:50% 0;-webkit-text-stroke:0.25px #555">K</div>
<div class="t" style="left:1340.5px;top:354.62px;width:80px;text-align:center;font-size:19.5px;line-height:19.5px;color:#555;transform:scaleX(0.8);transform-origin:50% 0;-webkit-text-stroke:0.25px #555">L</div>
<div class="t" style="left:0;top:388.57px;width:40.5px;text-align:center;font-size:19.8px;line-height:19.8px;color:#555;transform:scaleX(0.9);transform-origin:50% 0;-webkit-text-stroke:0.2px #555">1</div>
<div class="t" style="left:0;top:417.36px;width:40.5px;text-align:center;font-size:19.8px;line-height:19.8px;color:#555;transform:scaleX(0.9);transform-origin:50% 0;-webkit-text-stroke:0.2px #555">2</div>
<div class="t" style="left:0;top:446.15px;width:40.5px;text-align:center;font-size:19.8px;line-height:19.8px;color:#555;transform:scaleX(0.9);transform-origin:50% 0;-webkit-text-stroke:0.2px #555">3</div>
<div class="t" style="left:0;top:474.94px;width:40.5px;text-align:center;font-size:19.8px;line-height:19.8px;color:#555;transform:scaleX(0.9);transform-origin:50% 0;-webkit-text-stroke:0.2px #555">4</div>
<div class="t" style="left:0;top:503.73px;width:40.5px;text-align:center;font-size:19.8px;line-height:19.8px;color:#555;transform:scaleX(0.9);transform-origin:50% 0;-webkit-text-stroke:0.2px #555">5</div>
<div class="t" style="left:0;top:532.52px;width:40.5px;text-align:center;font-size:19.8px;line-height:19.8px;color:#555;transform:scaleX(0.9);transform-origin:50% 0;-webkit-text-stroke:0.2px #555">6</div>
<div class="t" style="left:0;top:561.31px;width:40.5px;text-align:center;font-size:19.8px;line-height:19.8px;color:#555;transform:scaleX(0.9);transform-origin:50% 0;-webkit-text-stroke:0.2px #555">7</div>
<div class="t" style="left:0;top:590.10px;width:40.5px;text-align:center;font-size:19.8px;line-height:19.8px;color:#555;transform:scaleX(0.9);transform-origin:50% 0;-webkit-text-stroke:0.2px #555">8</div>
<div class="t" style="left:0;top:618.89px;width:40.5px;text-align:center;font-size:19.8px;line-height:19.8px;color:#555;transform:scaleX(0.9);transform-origin:50% 0;-webkit-text-stroke:0.2px #555">9</div>
<div class="t" style="left:0;top:647.68px;width:40.5px;text-align:center;font-size:19.8px;line-height:19.8px;color:#555;transform:scaleX(0.9);transform-origin:50% 0;-webkit-text-stroke:0.2px #555">10</div>
<div class="t" style="left:0;top:676.47px;width:40.5px;text-align:center;font-size:19.8px;line-height:19.8px;color:#555;transform:scaleX(0.9);transform-origin:50% 0;-webkit-text-stroke:0.2px #555">11</div>
<div class="t" style="left:0;top:705.26px;width:40.5px;text-align:center;font-size:19.8px;line-height:19.8px;color:#555;transform:scaleX(0.9);transform-origin:50% 0;-webkit-text-stroke:0.2px #555">12</div>
<div class="t" style="left:0;top:734.05px;width:40.5px;text-align:center;font-size:19.8px;line-height:19.8px;color:#555;transform:scaleX(0.9);transform-origin:50% 0;-webkit-text-stroke:0.2px #555">13</div>
<div class="t" style="left:0;top:762.84px;width:40.5px;text-align:center;font-size:19.8px;line-height:19.8px;color:#555;transform:scaleX(0.9);transform-origin:50% 0;-webkit-text-stroke:0.2px #555">14</div>
<div class="t" style="left:0;top:791.63px;width:40.5px;text-align:center;font-size:19.8px;line-height:19.8px;color:#555;transform:scaleX(0.9);transform-origin:50% 0;-webkit-text-stroke:0.2px #555">15</div>
<div class="t" style="left:0;top:820.42px;width:40.5px;text-align:center;font-size:19.8px;line-height:19.8px;color:#555;transform:scaleX(0.9);transform-origin:50% 0;-webkit-text-stroke:0.2px #555">16</div>
<div class="t" style="left:0;top:849.21px;width:40.5px;text-align:center;font-size:19.8px;line-height:19.8px;color:#555;transform:scaleX(0.9);transform-origin:50% 0;-webkit-text-stroke:0.2px #555">17</div>
<div class="t" style="left:0;top:878.00px;width:40.5px;text-align:center;font-size:19.8px;line-height:19.8px;color:#555;transform:scaleX(0.9);transform-origin:50% 0;-webkit-text-stroke:0.2px #555">18</div>
<div class="t" style="left:0;top:906.79px;width:40.5px;text-align:center;font-size:19.8px;line-height:19.8px;color:#555;transform:scaleX(0.9);transform-origin:50% 0;-webkit-text-stroke:0.2px #555">19</div>
<div class="t" style="left:0;top:935.58px;width:40.5px;text-align:center;font-size:19.8px;line-height:19.8px;color:#555;transform:scaleX(0.9);transform-origin:50% 0;-webkit-text-stroke:0.2px #555">20</div>
<div class="t" style="left:0;top:964.37px;width:40.5px;text-align:center;font-size:19.8px;line-height:19.8px;color:#555;transform:scaleX(0.9);transform-origin:50% 0;-webkit-text-stroke:0.2px #555">21</div>
<div class="t" style="left:0;top:993.16px;width:40.5px;text-align:center;font-size:19.8px;line-height:19.8px;color:#555;transform:scaleX(0.9);transform-origin:50% 0;-webkit-text-stroke:0.2px #555">22</div>
<div class="t" style="left:0;top:1021.95px;width:40.5px;text-align:center;font-size:19.8px;line-height:19.8px;color:#555;transform:scaleX(0.9);transform-origin:50% 0;-webkit-text-stroke:0.2px #555">23</div>
<div class="t" style="left:0;top:1050.74px;width:40.5px;text-align:center;font-size:19.8px;line-height:19.8px;color:#555;transform:scaleX(0.9);transform-origin:50% 0;-webkit-text-stroke:0.2px #555">24</div>
<div class="t" style="left:0;top:1079.53px;width:40.5px;text-align:center;font-size:19.8px;line-height:19.8px;color:#555;transform:scaleX(0.9);transform-origin:50% 0;-webkit-text-stroke:0.2px #555">25</div>
<div class="t" style="left:0;top:1108.32px;width:40.5px;text-align:center;font-size:19.8px;line-height:19.8px;color:#555;transform:scaleX(0.9);transform-origin:50% 0;-webkit-text-stroke:0.2px #555">26</div>
<div class="t" style="left:0;top:1137.11px;width:40.5px;text-align:center;font-size:19.8px;line-height:19.8px;color:#555;transform:scaleX(0.9);transform-origin:50% 0;-webkit-text-stroke:0.2px #555">27</div>
<div class="t" style="left:0;top:1165.90px;width:40.5px;text-align:center;font-size:19.8px;line-height:19.8px;color:#555;transform:scaleX(0.9);transform-origin:50% 0;-webkit-text-stroke:0.2px #555">28</div>
<div class="t" style="left:0;top:1194.69px;width:40.5px;text-align:center;font-size:19.8px;line-height:19.8px;color:#555;transform:scaleX(0.9);transform-origin:50% 0;-webkit-text-stroke:0.2px #555">29</div>
<div class="t" style="left:0;top:1223.48px;width:40.5px;text-align:center;font-size:19.8px;line-height:19.8px;color:#555;transform:scaleX(0.9);transform-origin:50% 0;-webkit-text-stroke:0.2px #555">30</div>
<div class="t" style="left:39.31px;top:388.85px;font-size:19px;line-height:19px;font-weight:normal;color:#000;transform:scaleX(1.0415);transform-origin:0 0">header1</div>
<div class="t" style="left:156.31px;top:388.85px;font-size:19px;line-height:19px;font-weight:normal;color:#000;transform:scaleX(1.0423);transform-origin:0 0">header2</div>
<div class="t" style="left:272.82px;top:388.85px;font-size:19px;line-height:19px;font-weight:normal;color:#000;transform:scaleX(1.0401);transform-origin:0 0">header3</div>
<div class="t" style="left:390.12px;top:388.85px;font-size:19px;line-height:19px;font-weight:normal;color:#000;transform:scaleX(1.0357);transform-origin:0 0">header4</div>
<div class="t" style="left:39.85px;top:417.65px;font-size:19px;line-height:19px;font-weight:normal;color:#000;transform:scaleX(1.0537);transform-origin:0 0">data1</div>
<div class="t" style="left:156.85px;top:417.65px;font-size:19px;line-height:19px;font-weight:normal;color:#000;transform:scaleX(1.0548);transform-origin:0 0">data2</div>
<div class="t" style="left:273.35px;top:417.65px;font-size:19px;line-height:19px;font-weight:normal;color:#000;transform:scaleX(1.0515);transform-origin:0 0">data3</div>
<div class="t" style="left:390.66px;top:417.65px;font-size:19px;line-height:19px;font-weight:normal;color:#000;transform:scaleX(1.0451);transform-origin:0 0">data4</div>
<div class="t" style="left:39.85px;top:446.45px;font-size:19px;line-height:19px;font-weight:normal;color:#000;transform:scaleX(1.0537);transform-origin:0 0">data1</div>
<div class="t" style="left:156.85px;top:446.45px;font-size:19px;line-height:19px;font-weight:normal;color:#000;transform:scaleX(1.0548);transform-origin:0 0">data2</div>
<div class="t" style="left:273.35px;top:446.45px;font-size:19px;line-height:19px;font-weight:normal;color:#000;transform:scaleX(1.0515);transform-origin:0 0">data3</div>
<div class="t" style="left:390.66px;top:446.45px;font-size:19px;line-height:19px;font-weight:normal;color:#000;transform:scaleX(1.0451);transform-origin:0 0">data4</div>
<div class="t" style="left:39.85px;top:475.25px;font-size:19px;line-height:19px;font-weight:normal;color:#000;transform:scaleX(1.0537);transform-origin:0 0">data1</div>
<div class="t" style="left:156.85px;top:475.25px;font-size:19px;line-height:19px;font-weight:normal;color:#000;transform:scaleX(1.0548);transform-origin:0 0">data2</div>
<div class="t" style="left:273.35px;top:475.25px;font-size:19px;line-height:19px;font-weight:normal;color:#000;transform:scaleX(1.0515);transform-origin:0 0">data3</div>
<div class="t" style="left:390.66px;top:475.25px;font-size:19px;line-height:19px;font-weight:normal;color:#000;transform:scaleX(1.0451);transform-origin:0 0">data4</div>
<div class="t" style="left:39.85px;top:504.05px;font-size:19px;line-height:19px;font-weight:normal;color:#000;transform:scaleX(1.0537);transform-origin:0 0">data1</div>
<div class="t" style="left:156.85px;top:504.05px;font-size:19px;line-height:19px;font-weight:normal;color:#000;transform:scaleX(1.0548);transform-origin:0 0">data2</div>
<div class="t" style="left:273.35px;top:504.05px;font-size:19px;line-height:19px;font-weight:normal;color:#000;transform:scaleX(1.0515);transform-origin:0 0">data3</div>
<div class="t" style="left:390.66px;top:504.05px;font-size:19px;line-height:19px;font-weight:normal;color:#000;transform:scaleX(1.0451);transform-origin:0 0">data4</div>
<div class="t" style="left:39.85px;top:532.85px;font-size:19px;line-height:19px;font-weight:normal;color:#000;transform:scaleX(1.0537);transform-origin:0 0">data1</div>
<div class="t" style="left:156.85px;top:532.85px;font-size:19px;line-height:19px;font-weight:normal;color:#000;transform:scaleX(1.0548);transform-origin:0 0">data2</div>
<div class="t" style="left:273.35px;top:532.85px;font-size:19px;line-height:19px;font-weight:normal;color:#000;transform:scaleX(1.0515);transform-origin:0 0">data3</div>
<div class="t" style="left:390.66px;top:532.85px;font-size:19px;line-height:19px;font-weight:normal;color:#000;transform:scaleX(1.0451);transform-origin:0 0">data4</div>
<div class="t" style="left:39.85px;top:561.65px;font-size:19px;line-height:19px;font-weight:normal;color:#000;transform:scaleX(1.0537);transform-origin:0 0">data1</div>
<div class="t" style="left:156.85px;top:561.65px;font-size:19px;line-height:19px;font-weight:normal;color:#000;transform:scaleX(1.0548);transform-origin:0 0">data2</div>
<div class="t" style="left:273.35px;top:561.65px;font-size:19px;line-height:19px;font-weight:normal;color:#000;transform:scaleX(1.0515);transform-origin:0 0">data3</div>
<div class="t" style="left:390.66px;top:561.65px;font-size:19px;line-height:19px;font-weight:normal;color:#000;transform:scaleX(1.0451);transform-origin:0 0">data4</div>
<div class="t" style="left:39.85px;top:590.45px;font-size:19px;line-height:19px;font-weight:normal;color:#000;transform:scaleX(1.0537);transform-origin:0 0">data1</div>
<div class="t" style="left:156.85px;top:590.45px;font-size:19px;line-height:19px;font-weight:normal;color:#000;transform:scaleX(1.0548);transform-origin:0 0">data2</div>
<div class="t" style="left:273.35px;top:590.45px;font-size:19px;line-height:19px;font-weight:normal;color:#000;transform:scaleX(1.0515);transform-origin:0 0">data3</div>
<div class="t" style="left:390.66px;top:590.45px;font-size:19px;line-height:19px;font-weight:normal;color:#000;transform:scaleX(1.0451);transform-origin:0 0">data4</div>
<div class="t" style="left:39.85px;top:619.25px;font-size:19px;line-height:19px;font-weight:normal;color:#000;transform:scaleX(1.0537);transform-origin:0 0">data1</div>
<div class="t" style="left:156.85px;top:619.25px;font-size:19px;line-height:19px;font-weight:normal;color:#000;transform:scaleX(1.0548);transform-origin:0 0">data2</div>
<div class="t" style="left:273.35px;top:619.25px;font-size:19px;line-height:19px;font-weight:normal;color:#000;transform:scaleX(1.0515);transform-origin:0 0">data3</div>
<div class="t" style="left:390.66px;top:619.25px;font-size:19px;line-height:19px;font-weight:normal;color:#000;transform:scaleX(1.0451);transform-origin:0 0">data4</div>
<div class="t" style="left:39.85px;top:648.05px;font-size:19px;line-height:19px;font-weight:normal;color:#000;transform:scaleX(1.0537);transform-origin:0 0">data1</div>
<div class="t" style="left:156.85px;top:648.05px;font-size:19px;line-height:19px;font-weight:normal;color:#000;transform:scaleX(1.0548);transform-origin:0 0">data2</div>
<div class="t" style="left:273.35px;top:648.05px;font-size:19px;line-height:19px;font-weight:normal;color:#000;transform:scaleX(1.0515);transform-origin:0 0">data3</div>
<div class="t" style="left:390.66px;top:648.05px;font-size:19px;line-height:19px;font-weight:normal;color:#000;transform:scaleX(1.0451);transform-origin:0 0">data4</div>
<div class="t" style="left:39.85px;top:676.85px;font-size:19px;line-height:19px;font-weight:normal;color:#000;transform:scaleX(1.0537);transform-origin:0 0">data1</div>
<div class="t" style="left:156.85px;top:676.85px;font-size:19px;line-height:19px;font-weight:normal;color:#000;transform:scaleX(1.0548);transform-origin:0 0">data2</div>
<div class="t" style="left:273.35px;top:676.85px;font-size:19px;line-height:19px;font-weight:normal;color:#000;transform:scaleX(1.0515);transform-origin:0 0">data3</div>
<div class="t" style="left:390.66px;top:676.85px;font-size:19px;line-height:19px;font-weight:normal;color:#000;transform:scaleX(1.0451);transform-origin:0 0">data4</div>
<div class="t" style="left:39.85px;top:705.65px;font-size:19px;line-height:19px;font-weight:normal;color:#000;transform:scaleX(1.0537);transform-origin:0 0">data1</div>
<div class="t" style="left:156.85px;top:705.65px;font-size:19px;line-height:19px;font-weight:normal;color:#000;transform:scaleX(1.0548);transform-origin:0 0">data2</div>
<div class="t" style="left:273.35px;top:705.65px;font-size:19px;line-height:19px;font-weight:normal;color:#000;transform:scaleX(1.0515);transform-origin:0 0">data3</div>
<div class="t" style="left:390.66px;top:705.65px;font-size:19px;line-height:19px;font-weight:normal;color:#000;transform:scaleX(1.0451);transform-origin:0 0">data4</div>
<div class="t" style="left:39.85px;top:734.45px;font-size:19px;line-height:19px;font-weight:normal;color:#000;transform:scaleX(1.0537);transform-origin:0 0">data1</div>
<div class="t" style="left:156.85px;top:734.45px;font-size:19px;line-height:19px;font-weight:normal;color:#000;transform:scaleX(1.0548);transform-origin:0 0">data2</div>
<div class="t" style="left:273.35px;top:734.45px;font-size:19px;line-height:19px;font-weight:normal;color:#000;transform:scaleX(1.0515);transform-origin:0 0">data3</div>
<div class="t" style="left:390.66px;top:734.45px;font-size:19px;line-height:19px;font-weight:normal;color:#000;transform:scaleX(1.0451);transform-origin:0 0">data4</div>
<svg width="1444" height="1248" style="left:0;top:0"><rect x="507.2" y="763.1" width="40.7" height="36.6" rx="5" fill="#fbfbfb" stroke="#bdbdbd" stroke-width="1.5"/><path d="M511.2,766.3 L543.8,766.3 L543.8,771.6 L520,771.6 L520,789.6 L511.2,789.6 Z" fill="#a4c6ec"/><path d="M531.2,775.2 L536.6,775.2 L536.6,780.8 L541.8,780.8 L541.8,785.8 L536.6,785.8 L536.6,791.6 L531.2,791.6 L531.2,785.8 L525.8,785.8 L525.8,780.8 L531.2,780.8 Z" fill="#eb9a55" stroke="#e07a2a" stroke-width="0.8"/><rect x="511.2" y="791.5" width="1.6" height="1.6" fill="#555"/><rect x="518.6" y="791.5" width="1.6" height="1.6" fill="#555"/><rect x="511.2" y="795.2" width="1.6" height="1.6" fill="#555"/><rect x="514.9000000000001" y="795.2" width="1.6" height="1.6" fill="#555"/><rect x="518.6" y="795.2" width="1.6" height="1.6" fill="#555"/></svg>
</body></html>
